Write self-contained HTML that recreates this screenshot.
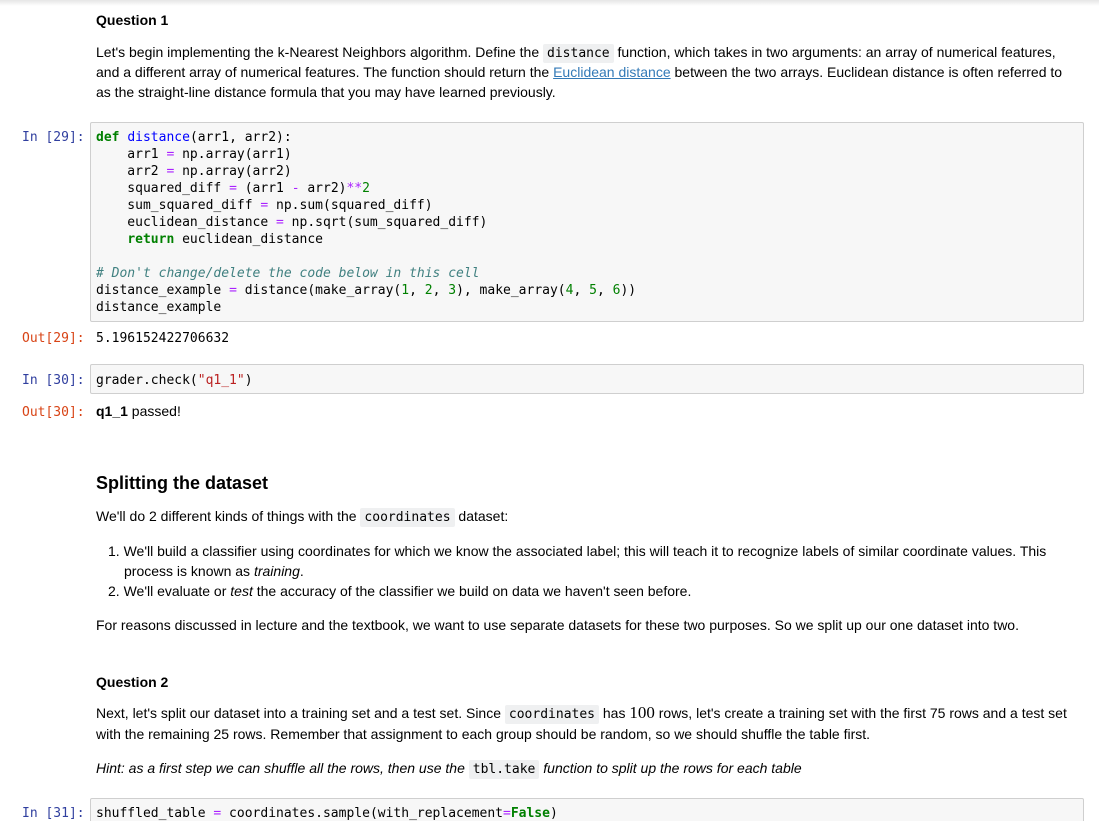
<!DOCTYPE html>
<html><head><meta charset="utf-8"><style>
html,body{margin:0;width:1099px;height:821px;overflow:hidden}
body{background:#fff;position:relative;font-family:"Liberation Sans",Arial,sans-serif;font-size:14px;color:#000}
.t{position:absolute;left:96px;white-space:nowrap;line-height:20px}
.top{position:absolute;left:0;top:0;width:1099px;height:6px;background:linear-gradient(#e6e6e6,#fff)}
code,.m{font-family:"DejaVu Sans Mono","Liberation Mono",monospace;font-size:13px}
code{background:#eff0f1;padding:2px 4px;border-radius:2px}
.box{position:absolute;left:90px;width:994px;background:#f7f7f7;border:1px solid #cfcfcf;border-radius:2px;box-sizing:border-box}
.pre{position:absolute;left:96px;white-space:pre;line-height:17px;font-family:"DejaVu Sans Mono","Liberation Mono",monospace;font-size:13px;color:#000}
.pin{position:absolute;left:22px;color:#303f9f;white-space:pre;font-family:"DejaVu Sans Mono","Liberation Mono",monospace;font-size:13px;line-height:17px}
.pout{position:absolute;left:22px;color:#d84315;white-space:pre;font-family:"DejaVu Sans Mono","Liberation Mono",monospace;font-size:13px;line-height:17px}
.k{color:#008000;font-weight:bold}.f{color:#0000ff}.o{color:#aa22ff}.n{color:#008000}.c{color:#408080;font-style:italic}.s{color:#ba2121}
a{color:#337ab7;text-decoration:underline}
b{font-weight:bold}
</style></head><body>
<div class="top"></div>
<div class="t" style="top:10px"><b>Question 1</b></div>
<div class="t" style="top:42px">Let's begin implementing the k-Nearest Neighbors algorithm. Define the <code>distance</code> function, which takes in two arguments: an array of numerical features,</div>
<div class="t" style="top:62px">and a different array of numerical features. The function should return the <a>Euclidean distance</a> between the two arrays. Euclidean distance is often referred to</div>
<div class="t" style="top:82px">as the straight-line distance formula that you may have learned previously.</div>

<div class="pin" style="top:129px">In [29]:</div>
<div class="box" style="top:122px;height:200px"></div>
<div class="pre" style="top:129px"><span class="k">def</span> <span class="f">distance</span>(arr1, arr2):
    arr1 <span class="o">=</span> np.array(arr1)
    arr2 <span class="o">=</span> np.array(arr2)
    squared_diff <span class="o">=</span> (arr1 <span class="o">-</span> arr2)<span class="o">**</span><span class="n">2</span>
    sum_squared_diff <span class="o">=</span> np.sum(squared_diff)
    euclidean_distance <span class="o">=</span> np.sqrt(sum_squared_diff)
    <span class="k">return</span> euclidean_distance

<span class="c"># Don't change/delete the code below in this cell</span>
distance_example <span class="o">=</span> distance(make_array(<span class="n">1</span>, <span class="n">2</span>, <span class="n">3</span>), make_array(<span class="n">4</span>, <span class="n">5</span>, <span class="n">6</span>))
distance_example</div>
<div class="pout" style="top:330px">Out[29]:</div>
<div class="pre" style="top:330px">5.196152422706632</div>

<div class="pin" style="top:372px">In [30]:</div>
<div class="box" style="top:364px;height:30px"></div>
<div class="pre" style="top:372px">grader.check(<span class="s">"q1_1"</span>)</div>
<div class="pout" style="top:404px">Out[30]:</div>
<div class="t" style="top:401px"><b>q1_1</b> passed!</div>

<div class="t" style="top:471px;font-size:18px;line-height:24px"><b>Splitting the dataset</b></div>
<div class="t" style="top:506px">We'll do 2 different kinds of things with the <code>coordinates</code> dataset:</div>
<div class="t" style="top:541px;left:108px">1. We'll build a classifier using coordinates for which we know the associated label; this will teach it to recognize labels of similar coordinate values. This</div>
<div class="t" style="top:561px;left:124px">process is known as <i>training</i>.</div>
<div class="t" style="top:581px;left:108px">2. We'll evaluate or <i>test</i> the accuracy of the classifier we build on data we haven't seen before.</div>
<div class="t" style="top:615px">For reasons discussed in lecture and the textbook, we want to use separate datasets for these two purposes. So we split up our one dataset into two.</div>

<div class="t" style="top:672px"><b>Question 2</b></div>
<div class="t" style="top:703px">Next, let's split our dataset into a training set and a test set. Since <code>coordinates</code> has <span style="font-family:'Liberation Serif',serif;font-size:17px">100</span> rows, let's create a training set with the first 75 rows and a test set</div>
<div class="t" style="top:724px">with the remaining 25 rows. Remember that assignment to each group should be random, so we should shuffle the table first.</div>
<div class="t" style="top:758px"><i>Hint: as a first step we can shuffle all the rows, then use the <code style="font-style:normal">tbl.take</code> function to split up the rows for each table</i></div>

<div class="pin" style="top:805px">In [31]:</div>
<div class="box" style="top:798px;height:40px"></div>
<div class="pre" style="top:805px">shuffled_table <span class="o">=</span> coordinates.sample(with_replacement<span class="o">=</span><span class="k">False</span>)</div>
</body></html>
